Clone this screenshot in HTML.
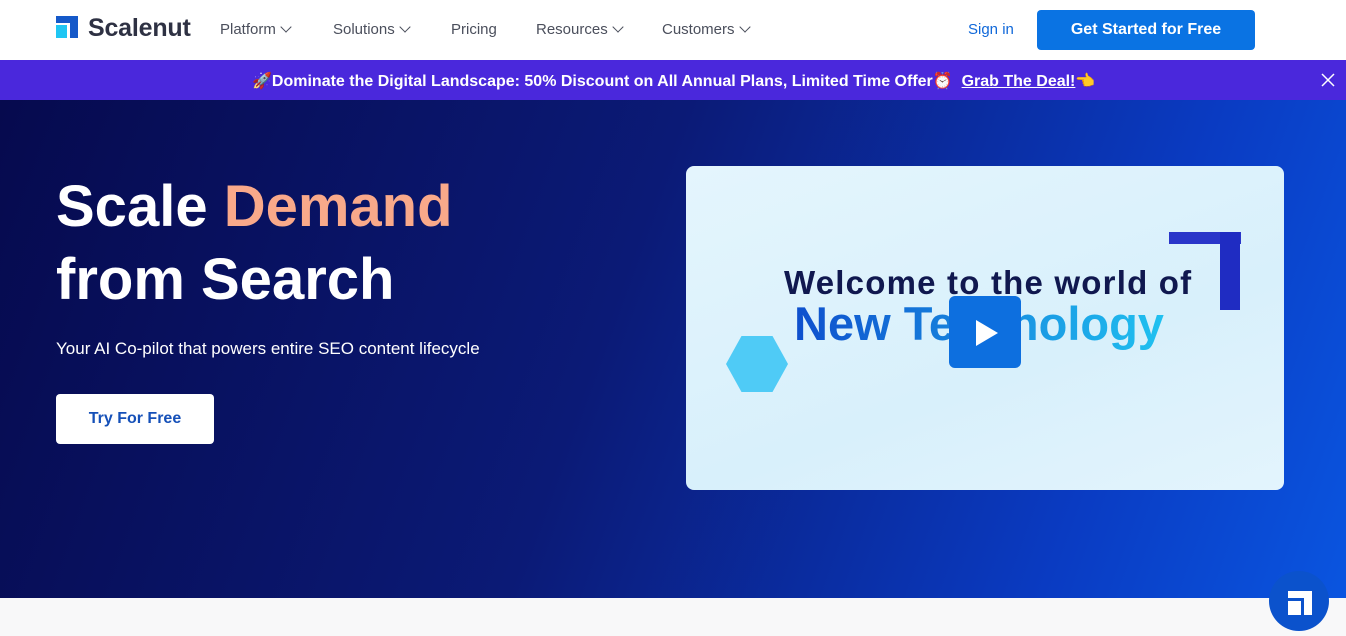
<!DOCTYPE html>
<html><head><meta charset="utf-8"><style>
*{margin:0;padding:0;box-sizing:border-box}
body{width:1346px;height:636px;overflow:hidden;font-family:"Liberation Sans",sans-serif;background:#f8f8f9;position:relative}
.nav{height:60px;background:#fff;position:relative}
.nav .it{position:absolute;top:21px;font-size:15px;color:#4b4f5c}
.chev{display:inline-block;width:8px;height:8px;border-right:1.5px solid #4b4f5c;border-bottom:1.5px solid #4b4f5c;transform:rotate(45deg);margin-left:6px;position:relative;top:-3px}
.banner{position:absolute;top:60px;left:0;width:1346px;height:40px;background:#4a28dc;color:#fff;font-size:16px;font-weight:bold}
.hero{position:absolute;top:100px;left:0;width:1346px;height:498px;background:linear-gradient(110deg,#060a4e 0%,#0b1a76 45%,#0a3bc2 80%,#0a55e0 100%)}
</style></head><body>
<div class="nav">
 <div style="position:absolute;left:56px;top:16px;width:22px;height:22px">
  <div style="position:absolute;left:0;top:0;width:22px;height:7px;background:#1559c9"></div>
  <div style="position:absolute;left:14px;top:0;width:8px;height:22px;background:#1559c9"></div>
  <div style="position:absolute;left:0;top:9px;width:11px;height:13px;background:#1fc6f3"></div>
 </div>
 <div style="position:absolute;left:88px;top:14px;font-size:25px;font-weight:bold;color:#2e3143;letter-spacing:-0.2px">Scalenut</div>
 <div class="it" style="left:220px">Platform<span class="chev"></span></div>
 <div class="it" style="left:333px">Solutions<span class="chev"></span></div>
 <div class="it" style="left:451px">Pricing</div>
 <div class="it" style="left:536px">Resources<span class="chev"></span></div>
 <div class="it" style="left:662px">Customers<span class="chev"></span></div>
 <div class="it" style="left:968px;color:#1068d9">Sign in</div>
 <div style="position:absolute;left:1037px;top:10px;width:218px;height:40px;background:#0a73e3;border-radius:4px;color:#fff;font-weight:bold;font-size:16px;text-align:center;line-height:40px">Get Started for Free</div>
</div>
<div class="banner">
 <div style="position:absolute;left:252px;top:11px;white-space:nowrap">🚀Dominate the Digital Landscape: 50% Discount on All Annual Plans, Limited Time Offer⏰ &nbsp;<u>Grab The Deal!</u>👈</div>
 <svg style="position:absolute;left:1321px;top:73px;position:fixed" width="14" height="14" viewBox="0 0 14 14"><path d="M1 1L13 13M13 1L1 13" stroke="#fff" stroke-width="1.5"/></svg>
</div>
<div class="hero">
 <div style="position:absolute;left:56px;top:70px;font-size:58px;font-weight:bold;color:#fff;line-height:73px">Scale <span style="color:#f9a98a">Demand</span><br>from Search</div>
 <div style="position:absolute;left:56px;top:239px;font-size:17px;color:#fff">Your AI Co-pilot that powers entire SEO content lifecycle</div>
 <div style="position:absolute;left:56px;top:294px;width:158px;height:50px;background:#fff;border-radius:4px;color:#1550b8;font-weight:bold;font-size:16px;text-align:center;line-height:50px">Try For Free</div>
 <div style="position:absolute;left:686px;top:66px;width:598px;height:324px;border-radius:8px;background:linear-gradient(160deg,#e4f5fd,#d8f0fb 60%,#e3f4fd);overflow:hidden">
  <div style="position:absolute;left:98px;top:98px;font-size:33px;font-weight:bold;color:#10184f;letter-spacing:1.2px;white-space:nowrap">Welcome to the world of</div>
  <div style="position:absolute;left:108px;top:130px;font-size:47px;font-weight:bold;background:linear-gradient(90deg,#0e4fcd,#20c1f0);-webkit-background-clip:text;color:transparent;white-space:nowrap">New Technology</div>
  <div style="position:absolute;left:483px;top:66px;width:72px;height:12px;background:#2a36c9"></div>
  <div style="position:absolute;left:534px;top:66px;width:20px;height:78px;background:#1f2cc2"></div>
  <div style="position:absolute;left:40px;top:170px;width:62px;height:56px;background:#3fc7f5;clip-path:polygon(25% 0,75% 0,100% 50%,75% 100%,25% 100%,0 50%);opacity:.9"></div>
  <div style="position:absolute;left:263px;top:130px;width:72px;height:72px;border-radius:6px;background:#0d6fdf"></div>
  <div style="position:absolute;left:290px;top:154px;width:0;height:0;border-left:22px solid #fff;border-top:13px solid transparent;border-bottom:13px solid transparent"></div>
 </div>
</div>
<div style="position:absolute;left:1269px;top:571px;width:60px;height:60px;border-radius:50%;background:#0b52cc">
 <div style="position:absolute;left:19px;top:20px;width:24px;height:7px;background:#fff"></div>
 <div style="position:absolute;left:35px;top:20px;width:8px;height:24px;background:#fff"></div>
 <div style="position:absolute;left:19px;top:30px;width:13px;height:14px;background:#fff"></div>
</div>
</body></html>
